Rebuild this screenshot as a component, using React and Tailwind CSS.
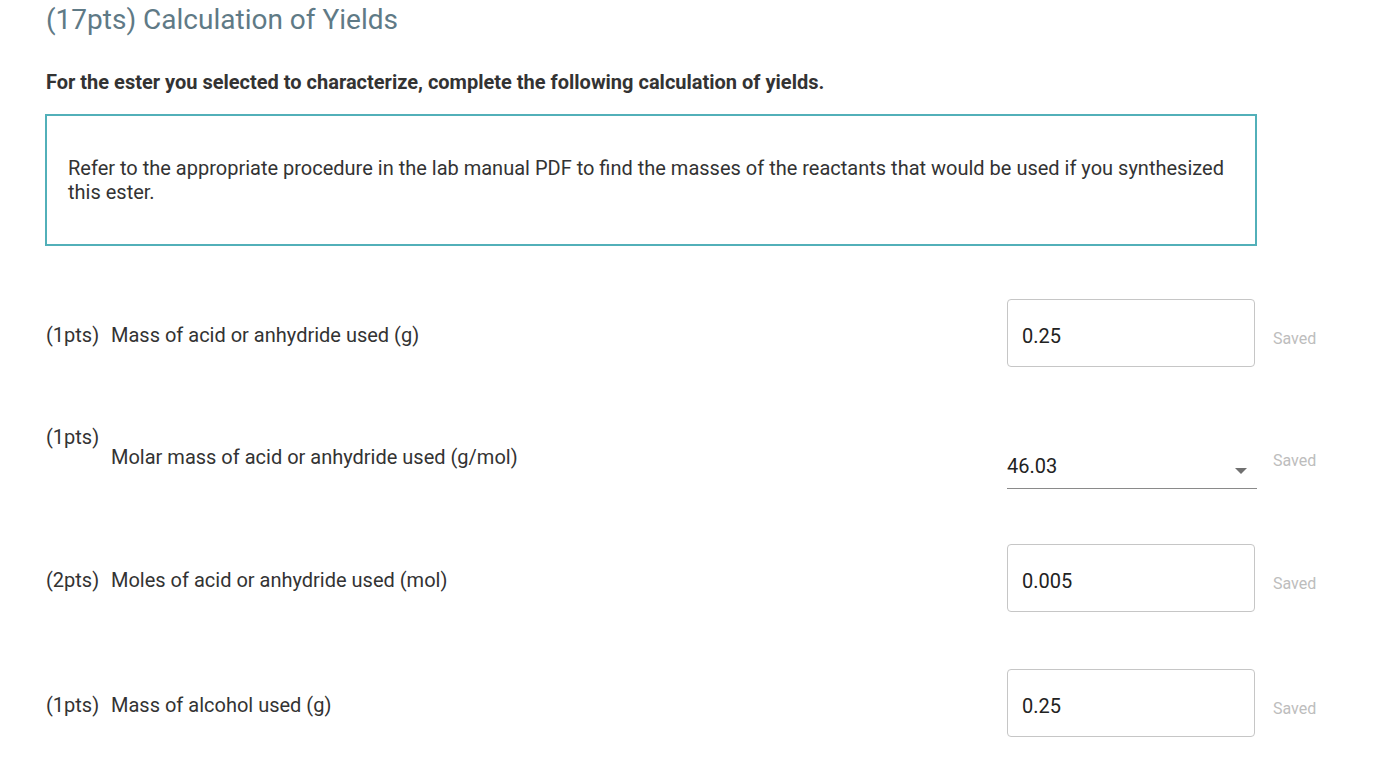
import React from "react";

const rows = [
  { pts: "(1pts)", label: "Mass of acid or anhydride used (g)", value: "0.25", type: "input" },
  { pts: "(1pts)", label: "Molar mass of acid or anhydride used (g/mol)", value: "46.03", type: "select" },
  { pts: "(2pts)", label: "Moles of acid or anhydride used (mol)", value: "0.005", type: "input" },
  { pts: "(1pts)", label: "Mass of alcohol used (g)", value: "0.25", type: "input" },
];

const Row = ({ pts, label, value, type }) => {
  const stacked = type === "select";
  return (
    <div className={stacked ? "flex items-start h-[63px]" : "flex items-start h-[68px]"}>
      {stacked ? (
        <div className="flex-1 pt-[1px]">
          <div className="text-[20px] leading-6 text-[#333]">{pts}</div>
          <div className="pl-[65px] -mt-[4px] text-[20px] leading-6 text-[#333]">{label}</div>
        </div>
      ) : (
        <div className="flex-1 flex pt-[24px] text-[20px] leading-6 text-[#333]">
          <span className="w-[65px] shrink-0">{pts}</span>
          <span>{label}</span>
        </div>
      )}

      {stacked ? (
        <div className="w-[250px] -mr-[2px] mt-[30px] h-[35px] border-b border-[#8a8a8a] flex items-start justify-between pr-[10px]">
          <span className="text-[20px] leading-6 text-[#222]">{value}</span>
          <svg width="12" height="6" viewBox="0 0 12 6" className="mt-[14px]">
            <path d="M0 0 L12 0 L6 6 Z" fill="#707070" />
          </svg>
        </div>
      ) : (
        <div className="w-[248px] h-[68px] border border-[#c6c6c6] rounded-[4px] px-[14px] pt-[24px] text-[20px] leading-6 text-[#222]">
          {value}
        </div>
      )}

      <div
        className={
          stacked
            ? "w-[58px] ml-[18px] mt-[27px] text-[16px] leading-5 text-[#bdbdbd]"
            : "w-[58px] ml-[18px] mt-[30px] text-[16px] leading-5 text-[#bdbdbd]"
        }
      >
        Saved
      </div>
    </div>
  );
};

export default function App() {
  return (
    <div
      className="min-h-screen bg-white pl-[46px] pr-[46px]"
      style={{ fontFamily: "Roboto, 'Liberation Sans', sans-serif" }}
    >
      <h1 className="text-[28px] leading-[38px] text-[#5f7a86] pt-[1px]">(17pts) Calculation of Yields</h1>

      <p className="mt-[31px] text-[20px] leading-6 font-bold text-[#333]">
        For the ester you selected to characterize, complete the following calculation of yields.
      </p>

      <div className="mt-[20px] -ml-[1px] w-[1212px] border-2 border-[#52b0b9] px-[21px] py-[40px]">
        <p className="text-[20px] leading-6 text-[#333]">
          Refer to the appropriate procedure in the lab manual PDF to find the masses of the reactants that would be used if you synthesized this ester.
        </p>
      </div>

      <div className="mt-[53px] flex flex-col gap-[57px]">
        {rows.map((r, i) => (
          <Row key={i} {...r} />
        ))}
      </div>
    </div>
  );
}
